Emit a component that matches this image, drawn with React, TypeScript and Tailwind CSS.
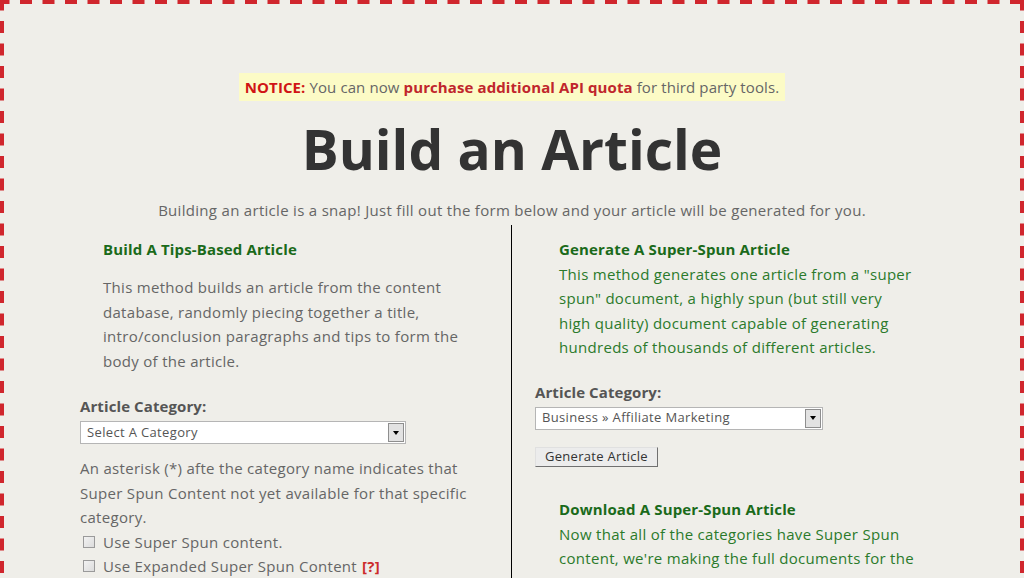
import React from "react";

const font = { fontFamily: '"Open Sans", "Liberation Sans", sans-serif' };

// Grey legacy-style select box
const CategorySelect = ({ value, width }: { value: string; width: string }) => (
  <div
    className={`flex h-[23px] items-stretch border border-[#b5b5b5] bg-white ${width}`}
  >
    <div className="flex flex-1 items-center px-[6px] text-[13px] tracking-[0.35px] text-[#555]">
      {value}
    </div>
    <div className="m-[1px] flex w-[16px] items-center justify-center border border-[#8e8e8e] bg-[#e2e2e2]">
      <span className="block h-0 w-0 border-x-[3.5px] border-t-[4px] border-x-transparent border-t-black" />
    </div>
  </div>
);

const Checkbox = () => (
  <span className="ml-[3px] mr-[8px] inline-block h-[12px] w-[12px] border border-[#9a9a9a] bg-gradient-to-br from-[#f2f2f2] to-[#dcdcdc]" />
);

// Dashed red frame around the page
const DashedFrame = () => (
  <svg className="pointer-events-none absolute inset-0 h-full w-full">
    <line x1="0" y1="2" x2="100%" y2="2" stroke="#d0262d" strokeWidth="4" strokeDasharray="12 10.5" strokeDashoffset="2.5" />
    <line x1="2" y1="0" x2="2" y2="100%" stroke="#d0262d" strokeWidth="4" strokeDasharray="12 10.5" strokeDashoffset="1.5" />
    <line x1="calc(100% - 2px)" y1="0" x2="calc(100% - 2px)" y2="100%" stroke="#d0262d" strokeWidth="4" strokeDasharray="12 10.5" strokeDashoffset="1.5" />
  </svg>
);

export default function App() {
  return (
    <div className="relative min-h-[700px] bg-[#efeee9] px-1 pt-1" style={font}>
      <DashedFrame />
      <div className="pt-[69px] text-center">
        <div className="inline-block bg-[#fcfbc6] px-[6px] py-[4px] text-[15px] leading-[20px] tracking-[0.1px] text-[#666]">
          <span className="font-bold text-[#d01515]">NOTICE:</span> You can now{" "}
          <span className="font-bold text-[#c0262c]">
            purchase additional API quota
          </span>{" "}
          for third party tools.
        </div>
      </div>

      <h1 className="mt-[15px] text-center text-[55px] font-bold leading-[66px] text-[#333]">
        Build an Article
      </h1>

      <p className="mt-[18px] text-center text-[15px] leading-[20px] tracking-[0.3px] text-[#666]">
        Building an article is a snap! Just fill out the form below and your
        article will be generated for you.
      </p>

      <div className="mx-auto mt-[5px] grid w-[912px] grid-cols-2">
        {/* Left column */}
        <div className="border-r border-black px-6 pt-[12px] pb-10">
          <div className="px-[23px]">
            <h3 className="text-[15px] font-bold leading-[24.5px] tracking-[0.15px] text-[#1a6a1a]">
              Build A Tips-Based Article
            </h3>
            <p className="mt-[13.5px] text-[15px] leading-[24.5px] tracking-[0.3px] text-[#666]">
              This method builds an article from the content database, randomly
              piecing together a title, intro/conclusion paragraphs and tips to
              form the body of the article.
            </p>
          </div>

          <div className="mt-[23px] text-[15px] font-bold leading-[20px] tracking-[0.1px] text-[#555]">
            Article Category:
          </div>
          <div className="mt-[5px]">
            <CategorySelect value="Select A Category" width="w-[326px]" />
          </div>

          <div className="text-[15px] leading-[24.5px] tracking-[0.3px] text-[#666]">
            <p className="mt-[12px]">
              An asterisk (*) afte the category name indicates that Super Spun
              Content not yet available for that specific category.
            </p>
            <div className="flex items-center">
              <Checkbox />
              Use Super Spun content.
            </div>
            <div className="flex items-center">
              <Checkbox />
              Use Expanded Super Spun Content
              <span className="ml-[5px] font-bold text-[#cc2b2b]">[?]</span>
            </div>
          </div>
        </div>

        {/* Right column */}
        <div className="pl-[23px] pr-6 pt-[12px] pb-10">
          <div className="pl-6 pr-[27px] text-[15px] leading-[24.5px] tracking-[0.3px] text-[#2b7a2b]">
            <h3 className="font-bold tracking-[0.15px] text-[#1a6a1a]">
              Generate A Super-Spun Article
            </h3>
            <p>
              This method generates one article from a "super spun" document, a
              highly spun (but still very high quality) document capable of
              generating hundreds of thousands of different articles.
            </p>
          </div>

          <div className="mt-[22px] text-[15px] font-bold leading-[20px] tracking-[0.1px] text-[#555]">
            Article Category:
          </div>
          <div className="mt-[5px]">
            <CategorySelect
              value="Business » Affiliate Marketing"
              width="w-[288px]"
            />
          </div>

          <button
            type="button"
            className="mt-[17px] h-[20px] border border-b-[#707070] border-l-[#e0e0e0] border-r-[#707070] border-t-[#e0e0e0] bg-[#ececec] px-[9px] text-[13px] leading-[17px] tracking-[0.3px] text-[#333]"
          >
            Generate Article
          </button>

          <div className="mt-[30px] pl-6 pr-[27px] text-[15px] leading-[24.5px] tracking-[0.3px] text-[#2b7a2b]">
            <h3 className="font-bold tracking-[0.15px] text-[#1a6a1a]">
              Download A Super-Spun Article
            </h3>
            <p>
              Now that all of the categories have Super Spun content, we're
              making the full documents for the super spun articles available
              for download as well.
            </p>
          </div>
        </div>
      </div>
    </div>
  );
}
